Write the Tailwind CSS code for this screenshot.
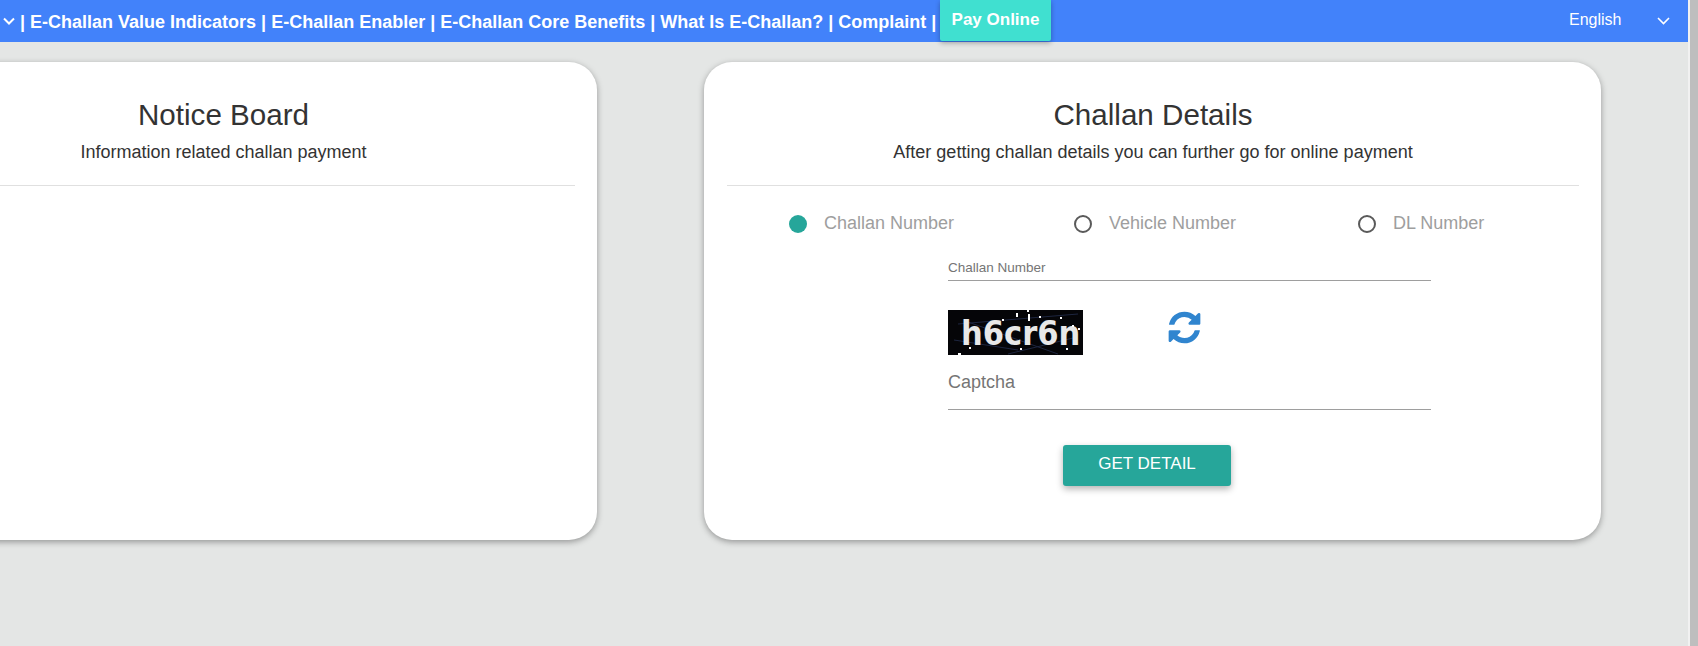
<!DOCTYPE html>
<html lang="en">
<head>
    <meta charset="UTF-8">
    <title>E-Challan</title>
    <script src="https://cdn.jsdelivr.net/npm/@tailwindcss/browser@4"></script>
</head>
<body class="h-[646px] overflow-hidden bg-[#e4e6e5] font-['Liberation_Sans',Arial,sans-serif]">
<div class="flex h-[646px]">
    <div class="w-[1688px] shrink-0 overflow-hidden">
        <!-- top nav -->
        <nav class="flex h-[42px] bg-[#4282fa] text-white">
            <div class="flex h-[42px] w-[940px] shrink-0 items-center pl-[3px] text-[18px] font-bold whitespace-nowrap">
                <svg class="mr-[5px] mb-[1px] h-[8px] w-[12px]" viewBox="0 0 12 8" fill="none" stroke="currentColor" stroke-width="2"><path d="M1 1.5l5 5 5-5"/></svg>
                <span class="pt-[3px]">| E-Challan Value Indicators | E-Challan Enabler | E-Challan Core Benefits | What Is E-Challan? | Complaint |</span>
            </div>
            <button class="flex h-[41px] w-[111px] shrink-0 justify-center rounded-b-[2px] bg-[#40e0d0] pt-[10px] text-[17px] leading-[20px] font-bold text-white shadow-[0_2px_5px_rgba(0,0,0,0.3)]">Pay Online</button>
            <div class="ml-[518px] flex h-[40px] items-center text-[16px]">English</div>
            <svg class="ml-[36px] mt-[17px] h-[8px] w-[13px]" viewBox="0 0 13 8" fill="none" stroke="currentColor" stroke-width="1.6"><path d="M1 1l5.5 5.5L12 1"/></svg>
        </nav>

        <main class="ml-[-150px] mt-[20px] flex gap-[107px]">
            <!-- notice board -->
            <section class="h-[478px] w-[747px] shrink-0 rounded-[28px] bg-white px-[22px] pt-[35px] text-center text-[#333] shadow-[0_2px_6px_rgba(0,0,0,0.35)]">
                <h2 class="text-[29.6px] leading-[36px]">Notice Board</h2>
                <p class="mt-[7px] text-[18px] leading-[24px]">Information related challan payment</p>
                <hr class="mt-[21px] border-[#e0e0e0]">
            </section>

            <!-- challan details -->
            <section class="h-[478px] w-[897px] shrink-0 rounded-[28px] bg-white pl-[23px] pr-[22px] pt-[35px] text-[#333] shadow-[0_2px_6px_rgba(0,0,0,0.35)]">
                <div class="text-center">
                    <h2 class="text-[29.6px] leading-[36px]">Challan Details</h2>
                    <p class="mt-[7px] text-[18px] leading-[24px]">After getting challan details you can further go for online payment</p>
                </div>
                <hr class="mt-[21px] border-[#e0e0e0]">

                <div class="mt-[25px] grid grid-cols-[285px_284px_284px] pl-[62px] text-[18px] leading-[24px] text-[#9e9e9e]">
                    <label class="flex items-center gap-[17px]"><span class="mt-[1px] h-[18px] w-[18px] rounded-full bg-[#26a69a]"></span>Challan Number</label>
                    <label class="flex items-center gap-[17px]"><span class="mt-[1px] h-[18px] w-[18px] rounded-full border-2 border-[#5a5a5a]"></span>Vehicle Number</label>
                    <label class="flex items-center gap-[17px]"><span class="mt-[1px] h-[18px] w-[18px] rounded-full border-2 border-[#5a5a5a]"></span>DL Number</label>
                </div>

                <div class="ml-[221px] w-[483px]">
                    <div class="mt-[25px] h-[21px] border-b border-[#9e9e9e] text-[13.5px] leading-[16px] text-[#757575]">Challan Number</div>

                    <div class="mt-[29px] flex">
                        <div class="relative h-[45px] w-[135px] overflow-hidden bg-[#050508]">
                            <svg class="absolute inset-0" width="135" height="45" viewBox="0 0 135 45" fill="none">
                                <path d="M10 14L130 4M20 12L110 44M6 30L70 40M60 44L125 28" stroke="#1e2640" stroke-width="1"/>
                            </svg>
                            <span class="relative block pl-[13px] font-['DejaVu_Sans_Condensed','DejaVu_Sans',sans-serif] text-[34px] leading-[47px] font-bold text-[#e8e8e8]">h6cr6n</span>
                            <svg class="absolute inset-0" width="135" height="45" viewBox="0 0 135 45" fill="#fff">
                                <rect x="68" y="3" width="2" height="4"/><rect x="79" y="0" width="2" height="2"/><rect x="80" y="4" width="2" height="7"/><rect x="54" y="9" width="2" height="2"/><rect x="91" y="6" width="2" height="2"/><rect x="112" y="7" width="2" height="2"/><rect x="124" y="15" width="2" height="2"/><rect x="130" y="18" width="2" height="2"/><rect x="10" y="43" width="3" height="2"/><rect x="21" y="37" width="2" height="2"/><rect x="72" y="38" width="2" height="2"/><rect x="118" y="38" width="2" height="2"/>
                            </svg>
                        </div>
                        <svg class="ml-[83px] mt-[-1px] h-[37px] w-[37px] text-[#3085cf]" viewBox="0 0 1792 1792" fill="currentColor"><path d="M1639 1056q0 5-1 7-64 268-268 434.5t-478 166.5q-146 0-282.5-55t-243.5-157l-129 129q-19 19-45 19t-45-19-19-45v-448q0-26 19-45t45-19h448q26 0 45 19t19 45-19 45l-137 137q71 66 161 102t187 36q134 0 250-65t186-179q11-17 53-117 8-23 30-23h192q13 0 22.5 9.5t9.5 22.5zm25-800v448q0 26-19 45t-45 19h-448q-26 0-45-19t-19-45 19-45l138-138q-148-137-349-137-134 0-250 65t-186 179q-11 17-53 117-8 23-30 23h-199q-13 0-22.5-9.5t-9.5-22.5v-7q65-268 270-434.5t480-166.5q146 0 284 55.5t245 156.5l130-129q19-19 45-19t45 19 19 45z"/></svg>
                    </div>

                    <div class="mt-[16px] h-[39px] border-b border-[#9e9e9e] text-[18px] leading-[22px] text-[#757575]">Captcha</div>
                </div>

                <div class="mt-[35px] pl-[336px]">
                    <button class="h-[41px] w-[168px] rounded-[3px] bg-[#26a69a] pb-[3px] text-[17px] text-white shadow-[0_3px_7px_rgba(0,0,0,0.3)]">GET DETAIL</button>
                </div>
            </section>
        </main>
    </div>

    <!-- page scrollbar -->
    <div class="w-[2px] shrink-0 bg-[#f1f1f1]"></div>
    <div class="w-[8px] shrink-0 bg-[#bebebe]"></div>
</div>
</body>
</html>
